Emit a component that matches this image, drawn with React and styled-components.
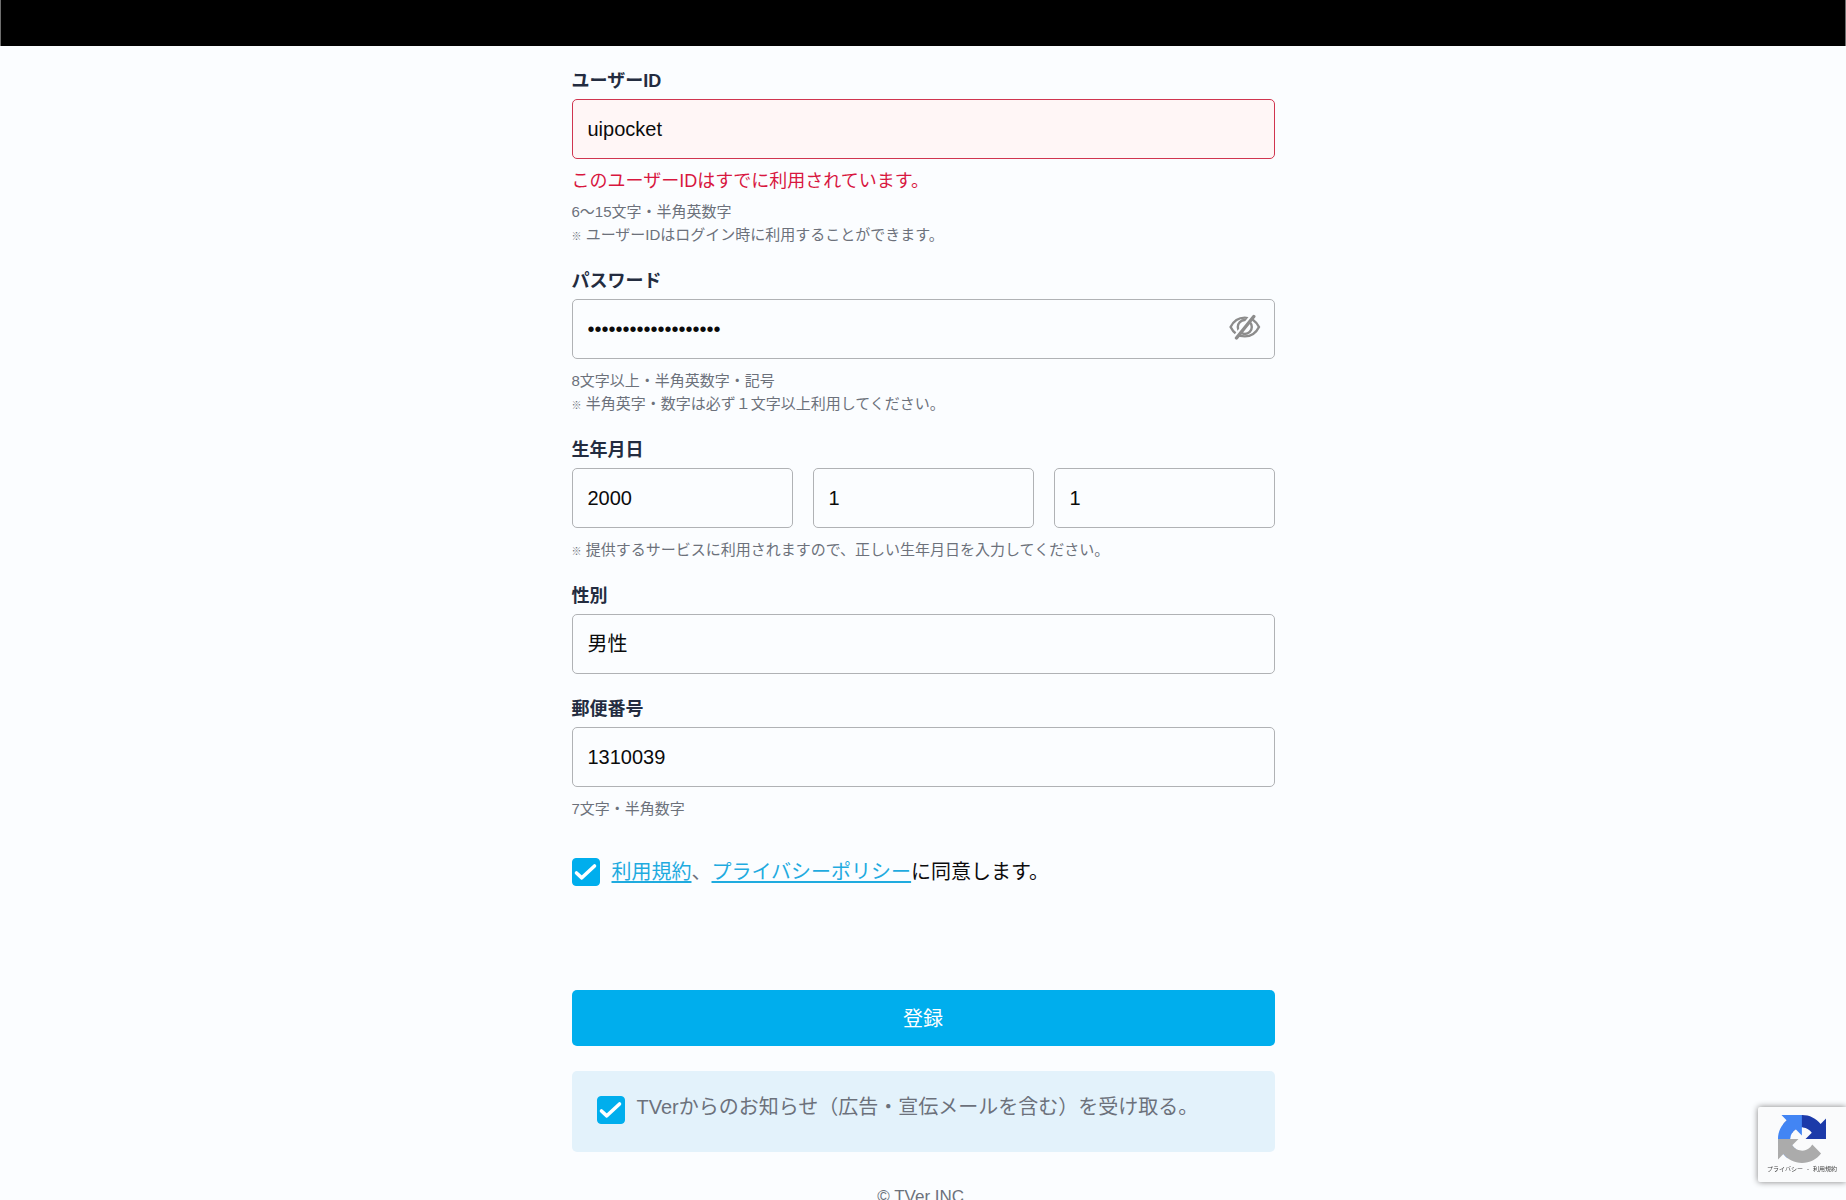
import { useState } from "react";
import styled, { createGlobalStyle, css } from "styled-components";

const GlobalStyle = createGlobalStyle`
  * {
    box-sizing: border-box;
  }

  body {
    margin: 0;
    background: #fbfdff;
    color: #0b0b0c;
    font-family: "Liberation Sans", "Noto Sans CJK JP", sans-serif;
  }
`;

const range = (from, to) => Array.from({ length: to - from + 1 }, (_, i) => String(from + i));

const birthFields = [
  { name: "year", label: "年", initial: "2000", options: range(1920, 2020) },
  { name: "month", label: "月", initial: "1", options: range(1, 12) },
  { name: "day", label: "日", initial: "1", options: range(1, 31) },
];

const App = () => {
  const [showPassword, setShowPassword] = useState(false);

  return (
    <>
      <GlobalStyle />
      <TopBar />
      <Page>
        <Form onSubmit={(e) => e.preventDefault()}>
          <Fields>
            <Field>
              <Label htmlFor="userId">ユーザーID</Label>
              <TextInput id="userId" defaultValue="uipocket" $error aria-invalid="true" />
              <Notes>
                <ErrorText>このユーザーIDはすでに利用されています。</ErrorText>
                <Hint>
                  6〜15文字・半角英数字
                  <br />
                  <Mark>※</Mark> ユーザーIDはログイン時に利用することができます。
                </Hint>
              </Notes>
            </Field>

            <Field>
              <Label htmlFor="password">パスワード</Label>
              <PasswordBox>
                <TextInput
                  id="password"
                  type={showPassword ? "text" : "password"}
                  defaultValue="uipocket12345678901"
                />
                <EyeButton
                  type="button"
                  aria-label="パスワードを表示"
                  onClick={() => setShowPassword(!showPassword)}
                >
                  <EyeOffIcon />
                </EyeButton>
              </PasswordBox>
              <Notes>
                <Hint>
                  8文字以上・半角英数字・記号
                  <br />
                  <Mark>※</Mark> 半角英字・数字は必ず１文字以上利用してください。
                </Hint>
              </Notes>
            </Field>

            <Field>
              <Label htmlFor="year">生年月日</Label>
              <BirthRow>
                {birthFields.map((field) => (
                  <SelectInput key={field.name} id={field.name} aria-label={field.label} defaultValue={field.initial}>
                    {field.options.map((option) => (
                      <option key={option}>{option}</option>
                    ))}
                  </SelectInput>
                ))}
              </BirthRow>
              <Notes>
                <Hint>
                  <Mark>※</Mark> 提供するサービスに利用されますので、正しい生年月日を入力してください。
                </Hint>
              </Notes>
            </Field>

            <Field>
              <Label htmlFor="gender">性別</Label>
              <SelectInput id="gender" defaultValue="男性">
                <option>男性</option>
                <option>女性</option>
              </SelectInput>
            </Field>

            <Field>
              <Label htmlFor="zip">郵便番号</Label>
              <TextInput id="zip" inputMode="numeric" defaultValue="1310039" />
              <Notes>
                <Hint>7文字・半角数字</Hint>
              </Notes>
            </Field>
          </Fields>

          <Agreement>
            <Checkbox id="agree" defaultChecked />
            <CheckLabel htmlFor="agree">
              <TextLink href="#terms">利用規約</TextLink>
              <Comma>、</Comma>
              <TextLink href="#privacy">プライバシーポリシー</TextLink>
              に同意します。
            </CheckLabel>
          </Agreement>

          <SubmitButton type="submit">登録</SubmitButton>

          <Newsletter>
            <Checkbox id="newsletter" defaultChecked />
            <CheckLabel htmlFor="newsletter" $muted>
              TVerからのお知らせ（広告・宣伝メールを含む）を受け取る。
            </CheckLabel>
          </Newsletter>
        </Form>
        <Footer>© TVer INC.</Footer>
      </Page>

      <RecaptchaBadge>
        <RecaptchaLogo />
        <BadgeLinks>
          <a href="#recaptcha-privacy">プライバシー</a>
          <span>-</span>
          <a href="#recaptcha-terms">利用規約</a>
        </BadgeLinks>
      </RecaptchaBadge>
    </>
  );
};

export default App;

const Checkbox = (props) => (
  <CheckBoxWrap>
    <CheckInput type="checkbox" {...props} />
    <svg viewBox="0 0 28 28" aria-hidden="true">
      <path d="M4.5 15L9.8 19.8L22.5 8" />
    </svg>
  </CheckBoxWrap>
);

const EyeOffIcon = () => (
  <svg width="32" height="26" viewBox="0 0 32 26" fill="none" stroke="#8c8c8c" strokeWidth="2.4" aria-hidden="true">
    <path d="M1.6 13C4.5 7 10 3.6 15.8 3.6S27 7 30 13c-3 6-8.400 9.400-14.200 9.400S4.500 19 1.600 13z" />
    <circle cx="15.800" cy="13" r="7" />
    <path d="M23.400 1L5.800 23" stroke="#fbfdff" strokeWidth="3.600" />
    <path d="M24.800 2.500L7.500 24" strokeWidth="3.400" strokeLinecap="round" />
  </svg>
);

const RecaptchaLogo = () => (
  <svg width="48" height="48" viewBox="0 0 64 64" aria-hidden="true">
    <path
      fill="#1c3aa9"
      d="M64 31.955l-.033-1.37V4.687l-7.16 7.16C50.948 4.674 42.033.093 32.05.093c-10.4 0-19.622 4.96-25.458 12.64l11.736 11.86a15.55 15.55 0 0 1 4.754-5.334c2.05-1.6 4.952-2.906 8.968-2.906.485 0 .86.057 1.135.163 4.976.393 9.288 3.14 11.828 7.124l-8.307 8.307L64 31.953"
    />
    <path
      fill="#4285f4"
      d="M31.862.094l-1.37.033H4.594l7.16 7.16C4.58 13.147 0 22.06 0 32.046c0 10.4 4.96 19.622 12.64 25.458L24.5 45.768a15.55 15.55 0 0 1-5.334-4.754c-1.6-2.05-2.906-4.952-2.906-8.968 0-.485.057-.86.163-1.135.393-4.976 3.14-9.288 7.124-11.828l8.307 8.307L31.86.095"
    />
    <path
      fill="#ababab"
      d="M.001 32.045l.033 1.37v25.898l7.16-7.16c5.86 7.173 14.774 11.754 24.76 11.754 10.4 0 19.622-4.96 25.458-12.64l-11.736-11.86a15.55 15.55 0 0 1-4.754 5.334c-2.05 1.6-4.952 2.906-8.968 2.906-.485 0-.86-.057-1.135-.163-4.976-.393-9.288-3.14-11.828-7.124l8.307-8.307c-10.522.04-22.4.066-27.295-.005"
    />
  </svg>
);

const TopBar = styled.header`
  height: 46px;
  border: solid #6e6e6e;
  border-width: 0 1px;
  background: #000;
`;

const Page = styled.main`
  padding: 23px 16px 32px;
`;

const Form = styled.form`
  max-width: 703px;
  margin: 0 auto;
`;

const Fields = styled.div`
  display: grid;
  gap: 23px;
`;

const Field = styled.div`
  display: flex;
  flex-direction: column;
`;

const Label = styled.label`
  margin-bottom: 6px;
  font-size: 18px;
  font-weight: 700;
  line-height: 24px;
  color: #232c40;
`;

const controlStyle = css`
  width: 100%;
  min-width: 0;
  height: 60px;
  padding: 0 15px;
  border: 1px solid #b0b2b5;
  border-radius: 5px;
  background: transparent;
  color: #0b0b0c;
  font-family: inherit;
  font-size: 20px;
  appearance: none;
`;

const TextInput = styled.input`
  ${controlStyle}

  ${({ $error }) =>
    $error &&
    css`
      border-color: #d0354f;
      background: #fff6f6;
    `}
`;

const SelectInput = styled.select`
  ${controlStyle}
`;

const PasswordBox = styled.div`
  position: relative;
`;

const EyeButton = styled.button`
  position: absolute;
  top: 0;
  right: 14px;
  height: 56px;
  padding: 0;
  border: 0;
  background: none;
  display: flex;
  align-items: center;
  cursor: pointer;
`;

const BirthRow = styled.div`
  display: grid;
  grid-template-columns: repeat(3, 1fr);
  gap: 20px;
`;

const Notes = styled.div`
  margin-top: 10px;
  display: grid;
  gap: 7px;
`;

const ErrorText = styled.p`
  margin: 0;
  font-size: 18px;
  line-height: 24px;
  color: #d8173f;
`;

const Hint = styled.p`
  margin: 0;
  font-size: 15px;
  line-height: 23px;
  color: #6c717b;
`;

const Mark = styled.span`
  font-size: 10px;
  font-weight: 700;
  line-height: 1;
`;

const Agreement = styled.div`
  margin-top: 38px;
  display: flex;
  gap: 12px;
`;

const CheckBoxWrap = styled.span`
  position: relative;
  flex: none;
  width: 28px;
  height: 28px;

  svg {
    position: absolute;
    inset: 0;
    pointer-events: none;
    fill: none;
    stroke: #fff;
    stroke-width: 3.6;
    stroke-linecap: round;
    stroke-linejoin: round;
  }
`;

const CheckInput = styled.input`
  display: block;
  width: 28px;
  height: 28px;
  margin: 0;
  border: 1px solid #b0b2b5;
  border-radius: 4px;
  appearance: none;

  &:checked {
    border-color: #00aeed;
    background: #00aeed;
  }

  &:not(:checked) + svg {
    display: none;
  }
`;

const CheckLabel = styled.label`
  font-size: 20px;
  line-height: 28px;
  color: ${({ $muted }) => ($muted ? "#6c717b" : "#0b0b0c")};
`;

const Comma = styled.span`
  color: #6c717b;
`;

const TextLink = styled.a`
  color: #1fabdf;
  text-decoration: underline;
  text-underline-offset: 2px;
`;

const SubmitButton = styled.button`
  display: block;
  width: 100%;
  height: 56px;
  margin-top: 104px;
  padding: 0 0 2px;
  border: 0;
  border-radius: 5px;
  background: #00aeed;
  color: #fff;
  font-family: inherit;
  font-size: 20px;
  cursor: pointer;
`;

const Newsletter = styled.div`
  margin-top: 25px;
  padding: 22px 25px 28px;
  border-radius: 5px;
  background: #e3f2fb;
  display: flex;
  gap: 12px;

  ${CheckBoxWrap} {
    margin-top: 3px;
  }
`;

const Footer = styled.footer`
  margin-top: 33px;
  text-align: center;
  font-size: 17px;
  line-height: 24px;
  color: #6c717b;
`;

const RecaptchaBadge = styled.aside`
  position: fixed;
  right: 0;
  bottom: 18px;
  width: 88px;
  height: 75px;
  padding-top: 8px;
  border-radius: 2px 0 0 2px;
  background: #fafbfc;
  box-shadow: 0 0 6px #808080;
  display: flex;
  flex-direction: column;
  align-items: center;
`;

const BadgeLinks = styled.nav`
  display: flex;
  gap: 4px;
  font-size: 6px;
  line-height: 12px;
  color: #444;

  a {
    color: inherit;
    text-decoration: none;
  }
`;
